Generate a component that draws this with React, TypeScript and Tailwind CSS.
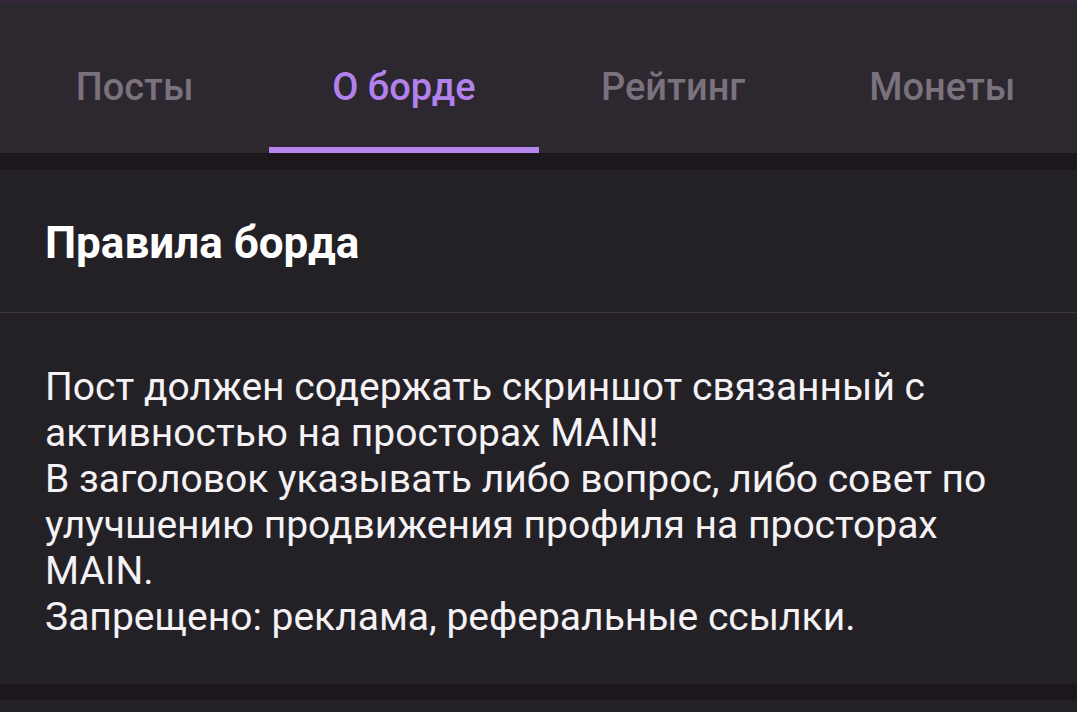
const tabs = ["Посты", "О борде", "Рейтинг", "Монеты"];

export default function App() {
  const active = 1;
  return (
    <div
      className="flex h-[712px] w-[1077px] flex-col overflow-hidden bg-[#1b171c]"
      style={{ fontFamily: "Roboto, 'Noto Sans', sans-serif" }}
    >
      <div className="h-[3px] shrink-0 bg-[#33263d]" />
      <nav className="grid shrink-0 grid-cols-4 bg-[#2d2730]">
        {tabs.map((t, i) => (
          <div
            key={t}
            className={
              i === active
                ? "h-[150px] border-b-[6px] border-[#b587ee] pt-[63px] text-center text-[38px] font-medium leading-[42px] text-[#b282ec]"
                : "h-[150px] border-b-[6px] border-transparent pt-[63px] text-center text-[38px] font-medium leading-[42px] text-[#7a727d]"
            }
          >
            {t}
          </div>
        ))}
      </nav>

      <section className="mt-[17px] shrink-0 bg-[#242126]">
        <h2 className="border-b border-[#3a363c] px-[45px] pb-[47px] pt-[51px] text-[44px] font-bold leading-[44px] text-white">
          Правила борда
        </h2>
        <p className="pb-[44px] pl-[45px] pr-[40px] pt-[51px] text-[39px] leading-[46px] text-[#f4f2f5]">
          Пост должен содержать скриншот связанный с активностью на просторах MAIN!
          <br />
          В заголовок указывать либо вопрос, либо совет по улучшению продвижения профиля на просторах MAIN.
          <br />
          Запрещено: реклама, реферальные ссылки.
        </p>
      </section>

      <div className="mt-[16px] h-[40px] shrink-0 bg-[#242126]" />
    </div>
  );
}
